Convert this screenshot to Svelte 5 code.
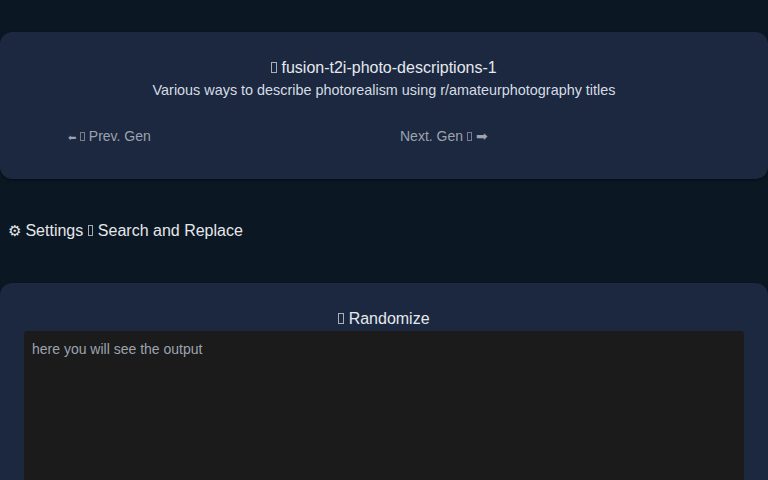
<script>
  let output = $state('');
  let title = 'fusion-t2i-photo-descriptions-1';
  let description = 'Various ways to describe photorealism using r/amateurphotography titles';
</script>

<div class="page">
  <section class="panel header">
    <h1><i class="tofu"></i> {title}</h1>
    <p class="desc">{description}</p>
    <nav>
      <a href="#prev"><span class="back">&#x2B05;&#xFE0E;</span> <i class="tofu"></i> Prev. Gen</a>
      <a href="#next">Next. Gen <i class="tofu"></i> &#x27A1;&#xFE0E;</a>
    </nav>
  </section>

  <div class="tabs">
    <span><span class="gear">&#x2699;&#xFE0E;</span> Settings</span>
    <span><i class="tofu"></i> Search and Replace</span>
  </div>

  <section class="panel main">
    <button><i class="tofu"></i> Randomize</button>
    <textarea bind:value={output} placeholder="here you will see the output"></textarea>
  </section>
</div>

<style>
  :global(body) {
    background: #0b1722;
    font-family: 'Liberation Sans', sans-serif;
    overflow: hidden;
  }

  .page {
    height: 480px;
    overflow: hidden;
    padding-top: 32px;
    box-sizing: border-box;
  }

  .panel {
    background: #1b283f;
    border-radius: 12px;
    box-shadow: 0 1px 3px rgba(0, 0, 0, .5);
  }

  /* missing-glyph box, same as the emoji without a font */
  .tofu {
    display: inline-block;
    width: .36em;
    height: .68em;
    box-sizing: border-box;
    border: 1px solid currentColor;
    opacity: .7;
    vertical-align: -.02em;
  }

  .back {
    font-size: 10px;
  }

  .gear {
    font-size: 14.6px;
  }

  .header {
    height: 147px;
    box-sizing: border-box;
    padding-top: 26px;
    text-align: center;
  }

  h1 {
    margin: 0;
    font-size: 16px;
    font-weight: 400;
    line-height: 20px;
    color: #e5e9ef;
  }

  .desc {
    margin: 2px 0 0;
    font-size: 14.4px;
    line-height: 20px;
    color: #d6dce4;
  }

  nav {
    display: grid;
    grid-template-columns: 332px 1fr;
    padding: 0 68px;
    margin-top: 26px;
    text-align: left;
    font-size: 14px;
    line-height: 20px;
  }

  nav a {
    color: #9ca3af;
    text-decoration: none;
  }

  .tabs {
    display: flex;
    gap: 4.4px;
    padding: 0 8px;
    margin-top: 42px;
    height: 20px;
    font-size: 16px;
    line-height: 20px;
    color: #e5e7eb;
  }

  .main {
    margin-top: 42px;
    height: 240px;
    padding: 0 24px;
    box-sizing: border-box;
    text-align: center;
  }

  button {
    display: block;
    width: 100%;
    height: 48px;
    padding: 24px 0 0;
    background: none;
    border: none;
    font-family: inherit;
    font-size: 16px;
    line-height: 20px;
    color: #e5e9ef;
  }

  textarea {
    display: block;
    width: 100%;
    height: 192px;
    box-sizing: border-box;
    padding: 8px;
    background: #1b1b1b;
    border: none;
    border-radius: 3px 3px 0 0;
    font-family: inherit;
    font-size: 14px;
    line-height: 20px;
    color: #e5e7eb;
    outline: none;
    resize: none;
  }

  textarea::placeholder {
    color: #9ca3af;
    opacity: 1;
  }
</style>
